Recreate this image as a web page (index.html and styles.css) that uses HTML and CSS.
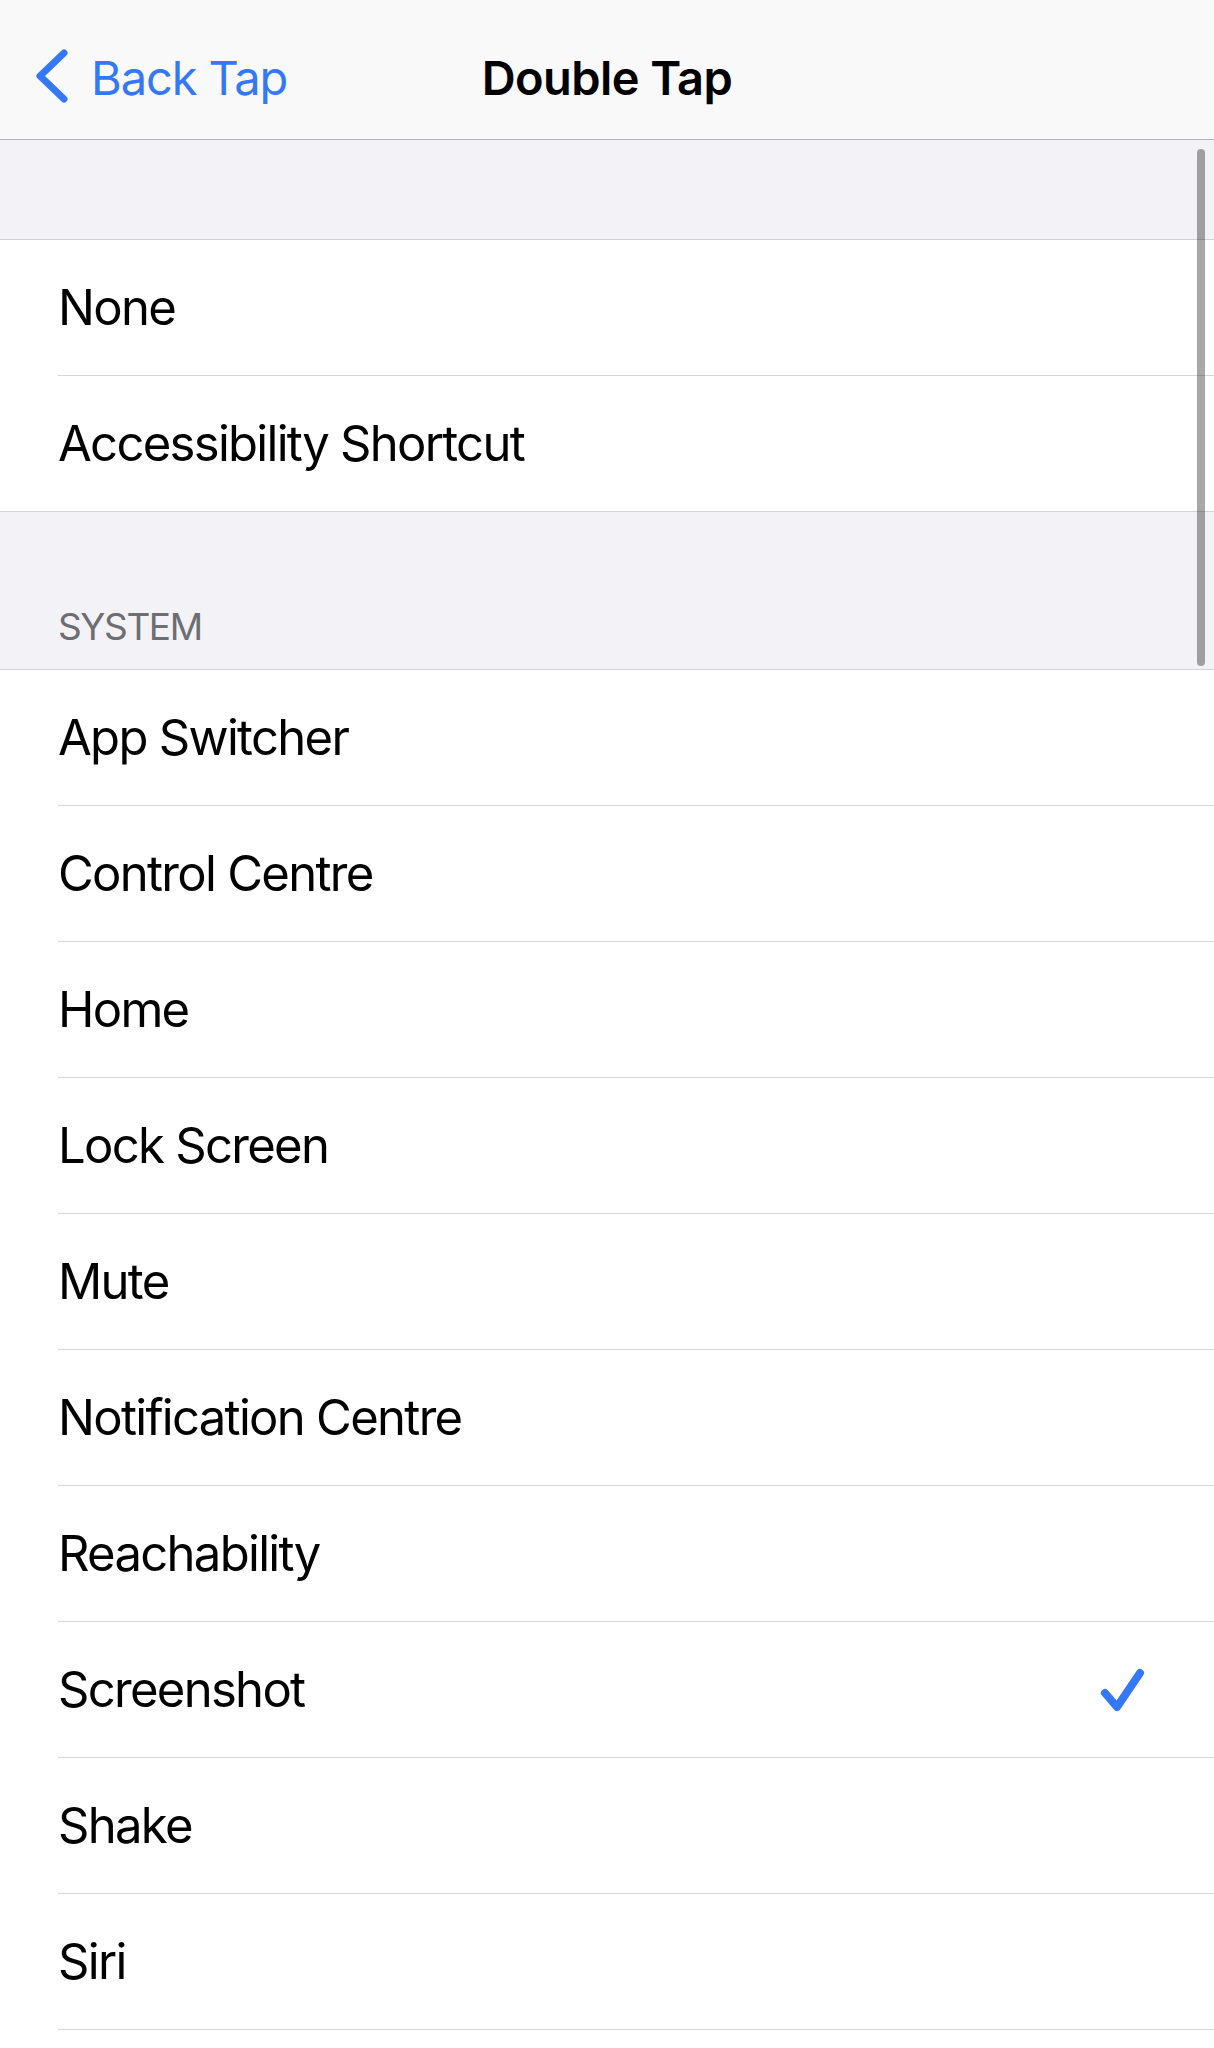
FILE: index.html
```html
<!DOCTYPE html>
<html lang="en">
<head>
<meta charset="utf-8">
<title>Double Tap</title>
<link rel="stylesheet" href="styles.css">
</head>
<body>
<div class="screen">
  <header class="navbar">
    <a class="back" href="#">
      <svg class="back-chevron" width="36" height="60" viewBox="0 0 36 60" aria-hidden="true">
        <path d="M30 5 L6 28 L30 51" fill="none" stroke="currentColor" stroke-width="7" stroke-linecap="round" stroke-linejoin="round"/>
      </svg>
      <span class="back-label">Back Tap</span>
    </a>
    <h1 class="nav-title">Double Tap</h1>
    <div class="nav-spacer"></div>
  </header>

  <div class="group-gap"></div>

  <ul class="group">
    <li class="row"><div class="row-inner">None</div></li>
    <li class="row"><div class="row-inner">Accessibility Shortcut</div></li>
  </ul>

  <div class="section-header"><span>SYSTEM</span></div>

  <ul class="group">
    <li class="row"><div class="row-inner">App Switcher</div></li>
    <li class="row"><div class="row-inner">Control Centre</div></li>
    <li class="row"><div class="row-inner">Home</div></li>
    <li class="row"><div class="row-inner">Lock Screen</div></li>
    <li class="row"><div class="row-inner">Mute</div></li>
    <li class="row"><div class="row-inner">Notification Centre</div></li>
    <li class="row"><div class="row-inner">Reachability</div></li>
    <li class="row selected">
      <div class="row-inner">
        <span>Screenshot</span>
        <svg class="check" width="48" height="48" viewBox="0 0 48 48" aria-hidden="true">
          <path d="M7 27 L19 41 L42 7" fill="none" stroke="currentColor" stroke-width="8" stroke-linecap="round" stroke-linejoin="round"/>
        </svg>
      </div>
    </li>
    <li class="row"><div class="row-inner">Shake</div></li>
    <li class="row"><div class="row-inner">Siri</div></li>
    <li class="row"><div class="row-inner"></div></li>
  </ul>

  <div class="scroll-thumb"></div>
</div>
</body>
</html>
```

FILE: styles.css
```css
html, body {
  margin: 0;
  padding: 0;
  background: #ffffff;
}

body {
  font-family: Inter, "Noto Sans", "Liberation Sans", sans-serif;
  color: #000000;
  -webkit-font-smoothing: antialiased;
}

.screen {
  position: relative;
  width: 1214px;
  min-height: 2048px;
  overflow: hidden;
  background: #ffffff;
}

/* Navigation bar */
.navbar {
  height: 140px;
  box-sizing: border-box;
  padding-top: 15px;
  border-bottom: 1px solid #b4b4b8;
  background: #f9f9f9;
  display: grid;
  grid-template-columns: 1fr auto 1fr;
  align-items: center;
}

.back {
  display: flex;
  align-items: center;
  color: #3478f6;
  text-decoration: none;
  padding-left: 34px;
}

.back-chevron {
  display: block;
  margin-top: 2px;
}

.back-label {
  font-size: 47px;
  letter-spacing: -1.1px;
  margin-left: 21px;
}

.nav-title {
  margin: 0;
  font-size: 47px;
  font-weight: 600;
  letter-spacing: -0.6px;
}

/* Grouped table */
.group-gap {
  height: 99px;
  background: #f2f2f7;
}

.group {
  list-style: none;
  margin: 0;
  padding: 0;
  border-top: 1px solid #d1d1d6;
  border-bottom: 1px solid #d1d1d6;
  background: #ffffff;
}

.group:last-of-type {
  border-bottom: none;
}

.row {
  padding-left: 58px;
}

.row-inner {
  height: 135px;
  display: flex;
  align-items: center;
  justify-content: space-between;
  padding-right: 68px;
  border-bottom: 1px solid #d6d6da;
  font-size: 49px;
  letter-spacing: -1.7px;
}

.group .row:last-child .row-inner {
  border-bottom: none;
}

.group:last-of-type .row:last-child .row-inner {
  height: 40px;
}

.check {
  display: block;
  color: #3478f6;
}

.section-header {
  height: 157px;
  background: #f2f2f7;
  display: flex;
  align-items: flex-end;
  padding-left: 58px;
  box-sizing: border-box;
  padding-bottom: 20px;
}

.section-header span {
  font-size: 37px;
  color: #6d6d72;
  letter-spacing: -1.4px;
}

/* Scroll indicator drawn over the list */
.scroll-thumb {
  position: absolute;
  left: 1197px;
  top: 149px;
  width: 8px;
  height: 517px;
  border-radius: 4px;
  background: rgba(0, 0, 0, 0.34);
}
```
